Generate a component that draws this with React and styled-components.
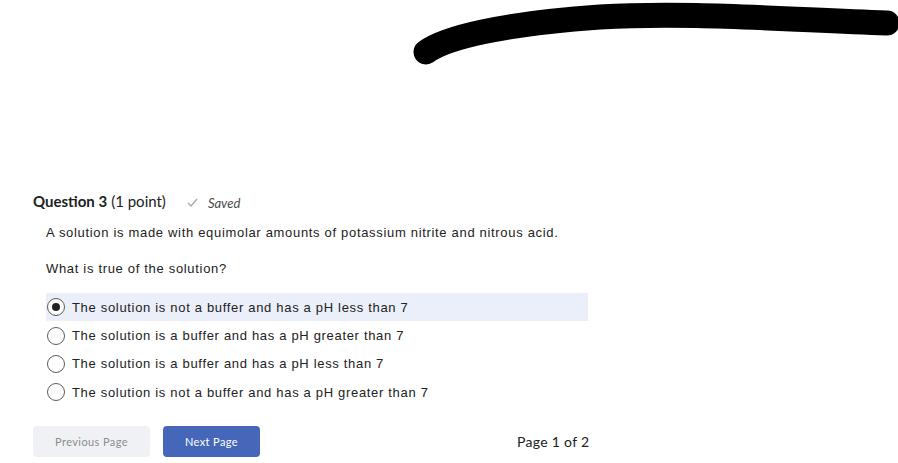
import React from "react";
import styled, { createGlobalStyle } from "styled-components";

const Global = createGlobalStyle`
  html, body { margin: 0; padding: 0; background: #fff; }
  body { width: 898px; height: 463px; overflow: hidden; }
`;

const Page = styled.div`
  position: relative;
  width: 898px;
  height: 463px;
  box-sizing: border-box;
  padding: 192px 0 0 33px;
`;

const Scribble = styled.svg`
  position: absolute;
  left: 0;
  top: 0;
  pointer-events: none;
`;

const Header = styled.div`
  display: flex;
  align-items: baseline;
  font-family: Lato, sans-serif;
  color: #202122;
  height: 22px;
`;

const Title = styled.span`
  font-size: 15px;
  font-weight: 700;
`;

const Points = styled.span`
  font-size: 15px;
  margin-left: 4px;
`;

const SavedWrap = styled.span`
  display: inline-flex;
  align-items: center;
  margin-left: 21px;
  color: #4a4a4a;
  font-size: 13px;
  font-style: italic;
  gap: 10px;
`;

const Body = styled.div`
  padding-left: 13px;
  font-family: "Liberation Sans", Arial, sans-serif;
  font-size: 13px;
  letter-spacing: 0.68px;
  color: #222;
`;

const Para = styled.p`
  margin: ${(p) => p.$top}px 0 0 0;
  line-height: 16px;
`;

const Options = styled.div`
  display: flex;
  flex-direction: column;
  width: 542px;
  margin-top: 16px;
`;

const Option = styled.label`
  display: flex;
  align-items: center;
  height: 28.4px;
  padding-left: 1px;
  gap: 7px;
  background: ${(p) => (p.$selected ? "#ebeffa" : "transparent")};
`;

const Radio = styled.span`
  width: 18px;
  height: 18px;
  border: 1.3px solid #5a5a5a;
  border-radius: 50%;
  box-sizing: border-box;
  display: inline-flex;
  align-items: center;
  justify-content: center;
  background: #fff;
  flex: none;
  &::after {
    content: "";
    width: 8px;
    height: 8px;
    border-radius: 50%;
    background: ${(p) => (p.$checked ? "#222" : "transparent")};
  }
`;

const Footer = styled.div`
  display: flex;
  align-items: center;
  margin-top: 19px;
  height: 31px;
`;

const Button = styled.button`
  height: 31px;
  width: ${(p) => p.$w}px;
  border: none;
  border-radius: 4px;
  font-family: Lato, sans-serif;
  font-size: 11px;
  letter-spacing: 0.4px;
  padding: 0;
  margin-right: 13px;
  background: ${(p) => (p.$primary ? "#4667b9" : "#f0f1f5")};
  color: ${(p) => (p.$primary ? "#fff" : "#8c8c8c")};
`;

const PageInfo = styled.span`
  font-family: Lato, sans-serif;
  font-size: 14px;
  letter-spacing: 0.3px;
  color: #202122;
  margin-left: 244px;
`;

const options = [
  "The solution is not a buffer and has a pH less than 7",
  "The solution is a buffer and has a pH greater than 7",
  "The solution is a buffer and has a pH less than 7",
  "The solution is not a buffer and has a pH greater than 7",
];

export default function App() {
  return (
    <>
      <Global />
      <Page>
        <Scribble width="898" height="80" viewBox="0 0 898 80">
          <path
            d="M426 52 C 445 38, 500 24, 600 17 C 680 12, 760 18, 887 23"
            fill="none"
            stroke="#000"
            strokeWidth="25"
            strokeLinecap="round"
          />
        </Scribble>
        <Header>
          <Title>Question 3</Title>
          <Points>(1 point)</Points>
          <SavedWrap>
            <svg width="11" height="9" viewBox="0 0 11 9">
              <path d="M1 5 L4 8 L10 1" fill="none" stroke="#aaa" strokeWidth="1.4" />
            </svg>
            Saved
          </SavedWrap>
        </Header>
        <Body>
          <Para $top={11}>A solution is made with equimolar amounts of potassium nitrite and nitrous acid.</Para>
          <Para $top={20}>What is true of the solution?</Para>
          <Options>
            {options.map((o, i) => (
              <Option key={i} $selected={i === 0}>
                <Radio $checked={i === 0} />
                {o}
              </Option>
            ))}
          </Options>
        </Body>
        <Footer>
          <Button $w={117}>Previous Page</Button>
          <Button $w={97} $primary>Next Page</Button>
          <PageInfo>Page 1 of 2</PageInfo>
        </Footer>
      </Page>
    </>
  );
}
